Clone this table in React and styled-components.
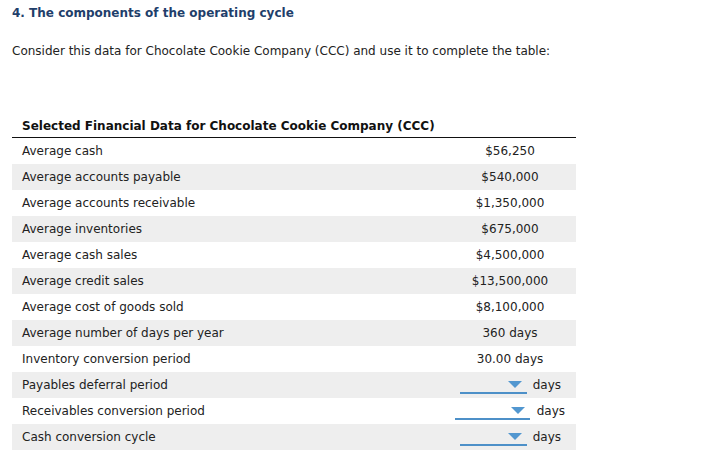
import React from 'react'
import styled, { createGlobalStyle } from 'styled-components'

const GlobalStyle = createGlobalStyle`
  body {
    margin: 0;
    background: #ffffff;
    font-family: "DejaVu Sans", Verdana, sans-serif;
    color: #222222;
  }
`

const Page = styled.div`
  padding: 5px 12px 0 12px;
  width: 564px;
`

const Title = styled.h1`
  margin: 0;
  font-size: 12px;
  font-weight: bold;
  color: #1f3f6b;
  line-height: 16px;
`

const Intro = styled.p`
  margin: 22px 0 0 0;
  font-size: 12px;
  line-height: 16px;
  color: #222222;
`

const Table = styled.div`
  margin-top: 59px;
  width: 564px;
`

const Caption = styled.div`
  font-size: 12px;
  font-weight: bold;
  color: #111111;
  padding: 0 0 3px 10px;
  line-height: 16px;
  border-bottom: 1px solid #111111;
`

const Row = styled.div`
  display: grid;
  grid-template-columns: 1fr 132px;
  align-items: center;
  height: 26px;
  background: ${(props) => (props.$shaded ? '#eeeeee' : '#ffffff')};
  font-size: 12px;
`

const Label = styled.div`
  padding-left: 10px;
`

const Value = styled.div`
  text-align: center;
`

const PickerCell = styled.div`
  display: flex;
  align-items: center;
  justify-content: flex-end;
  padding-right: ${(props) => props.$right}px;
`

const Picker = styled.div`
  position: relative;
  width: ${(props) => props.$width}px;
  height: 16px;
  border-bottom: 2px solid #4d90c8;
  margin-right: ${(props) => props.$gap}px;
`

const Arrow = styled.div`
  position: absolute;
  right: 5px;
  top: 5px;
  width: 0;
  height: 0;
  border-left: 7px solid transparent;
  border-right: 7px solid transparent;
  border-top: 7px solid #5297d0;
`

const Unit = styled.span``

const data = [
  ['Average cash', '$56,250'],
  ['Average accounts payable', '$540,000'],
  ['Average accounts receivable', '$1,350,000'],
  ['Average inventories', '$675,000'],
  ['Average cash sales', '$4,500,000'],
  ['Average credit sales', '$13,500,000'],
  ['Average cost of goods sold', '$8,100,000'],
  ['Average number of days per year', '360 days'],
  ['Inventory conversion period', '30.00 days'],
]

const pickers = [
  { label: 'Payables deferral period', width: 67, gap: 6, right: 15 },
  { label: 'Receivables conversion period', width: 75, gap: 7, right: 11 },
  { label: 'Cash conversion cycle', width: 67, gap: 6, right: 15 },
]

const App = () => {
  return (
    <>
      <GlobalStyle />
      <Page>
        <Title>4. The components of the operating cycle</Title>
        <Intro>Consider this data for Chocolate Cookie Company (CCC) and use it to complete the table:</Intro>
        <Table>
          <Caption>Selected Financial Data for Chocolate Cookie Company (CCC)</Caption>
          {data.map((item, id) => (
            <Row key={item[0]} $shaded={id % 2 === 1}>
              <Label>{item[0]}</Label>
              <Value>{item[1]}</Value>
            </Row>
          ))}
          {pickers.map((item, id) => (
            <Row key={item.label} $shaded={(id + data.length) % 2 === 1}>
              <Label>{item.label}</Label>
              <PickerCell $right={item.right}>
                <Picker $width={item.width} $gap={item.gap}>
                  <Arrow />
                </Picker>
                <Unit>days</Unit>
              </PickerCell>
            </Row>
          ))}
        </Table>
      </Page>
    </>
  )
}

export default App
